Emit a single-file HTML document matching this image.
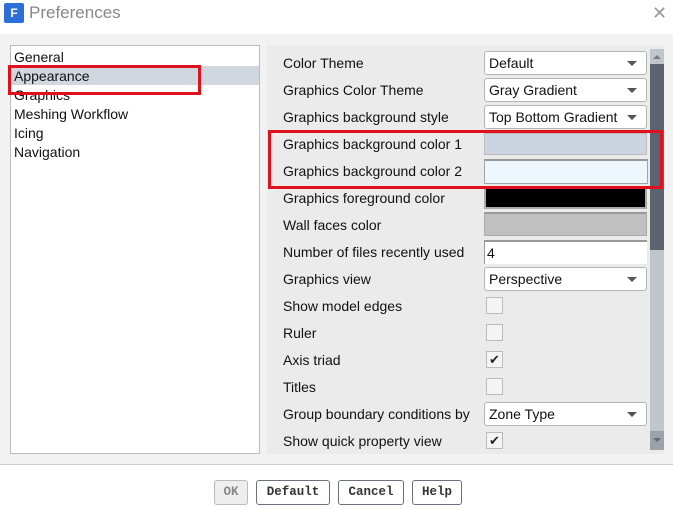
<!DOCTYPE html><html><head><style>
*{margin:0;padding:0;box-sizing:border-box}
body{width:673px;height:509px;background:#fff;font-family:"Liberation Sans","Noto Sans CJK SC",sans-serif;font-size:14px;color:#111;position:relative;overflow:hidden}
.abs{position:absolute}
.lbl{position:absolute;left:283px;font-size:14px}
.dd{position:absolute;left:484px;width:163px;height:24px;background:#fff;border:1px solid #b4b4b4;border-radius:3px;padding:3px 4px;font-size:14px}
.dd:after{content:"";position:absolute;right:9px;top:9px;border-left:5px solid transparent;border-right:5px solid transparent;border-top:5px solid #555}
.cb{position:absolute;left:486px;width:17px;height:17px;border:1px solid #bbb;background:#f4f4f4}
.btn{position:absolute;top:480px;height:25px;border:1px solid #6a7280;border-radius:3px;font-family:"Liberation Mono",monospace;font-weight:bold;font-size:12.5px;color:#333;text-align:center;line-height:23px;background:#fff}
</style></head><body>
<div class="abs" style="left:4px;top:3px;width:20px;height:20px;background:#2d6fd8;border-radius:2px;color:#fff;font-weight:bold;font-size:12px;text-align:center;line-height:20px">F</div>
<div class="abs" style="left:29px;top:3px;font-size:17px;color:#888">Preferences</div>
<div class="abs" style="left:652px;top:3px;font-size:18px;color:#999">✕</div>
<div class="abs" style="left:0;top:34px;width:673px;height:431px;background:#f2f2f2;border-bottom:1px solid #ccc"></div>
<div class="abs" style="left:10px;top:45px;width:250px;height:409px;background:#fff;border:1px solid #bbb"></div>
<div class="abs" style="left:11px;top:66px;width:248px;height:19px;background:#d0d7df"></div>
<div class="abs" style="left:14px;top:48px;line-height:19px;font-size:14px">General<br>Appearance<br>Graphics<br>Meshing Workflow<br>Icing<br>Navigation</div>
<div class="abs" style="left:8px;top:65px;width:193px;height:30px;border:3px solid #e0101e"></div>
<div class="abs" style="left:267px;top:45px;width:397px;height:409px;background:#ebebeb"></div>
<div class="abs" style="left:650px;top:49px;width:14px;height:401px;background:#c0c6cc"></div>
<div class="abs" style="left:650px;top:64px;width:14px;height:186px;background:#5b6270"></div>
<div class="abs" style="left:653px;top:55px;border-left:4px solid transparent;border-right:4px solid transparent;border-bottom:4px solid #778"></div>
<div class="abs" style="left:650px;top:431px;width:14px;height:19px;background:#9aa2ab"></div>
<div class="abs" style="left:653px;top:438px;border-left:4px solid transparent;border-right:4px solid transparent;border-top:4px solid #667"></div>
<div class="lbl" style="top:55px">Color Theme</div>
<div class="lbl" style="top:82px">Graphics Color Theme</div>
<div class="lbl" style="top:109px">Graphics background style</div>
<div class="lbl" style="top:136px">Graphics background color 1</div>
<div class="lbl" style="top:163px">Graphics background color 2</div>
<div class="lbl" style="top:190px">Graphics foreground color</div>
<div class="lbl" style="top:217px">Wall faces color</div>
<div class="lbl" style="top:244px">Number of files recently used</div>
<div class="lbl" style="top:271px">Graphics view</div>
<div class="lbl" style="top:298px">Show model edges</div>
<div class="lbl" style="top:325px">Ruler</div>
<div class="lbl" style="top:352px">Axis triad</div>
<div class="lbl" style="top:379px">Titles</div>
<div class="lbl" style="top:406px">Group boundary conditions by</div>
<div class="lbl" style="top:433px">Show quick property view</div>
<div class="dd" style="top:51px">Default</div>
<div class="dd" style="top:78px">Gray Gradient</div>
<div class="dd" style="top:105px">Top Bottom Gradient</div>
<div class="abs" style="left:484px;top:133px;width:163px;height:22px;background:#ccd3e1;border:1px solid #bbb"></div>
<div class="abs" style="left:484px;top:159px;width:164px;height:25px;background:#eef6fe;border:1px solid #9aa;border-top:2px solid #999"></div>
<div class="abs" style="left:484px;top:186px;width:163px;height:23px;background:#000;border:2px solid #aaa;border-top-width:3px"></div>
<div class="abs" style="left:484px;top:212px;width:163px;height:24px;background:#c0c0c0;border:1px solid #aaa;border-top:2px solid #999"></div>
<div class="abs" style="left:484px;top:240px;width:163px;height:24px;background:#fff;border-top:2px solid #999;border-left:1px solid #999;padding-left:2px;line-height:22px">4</div>
<div class="dd" style="top:267px">Perspective</div>
<div class="cb" style="top:297px"></div>
<div class="cb" style="top:324px"></div>
<div class="cb" style="top:351px;font-size:13px;line-height:15px;text-align:center;color:#222">✔</div>
<div class="cb" style="top:378px"></div>
<div class="dd" style="top:402px">Zone Type</div>
<div class="cb" style="top:432px;font-size:13px;line-height:15px;text-align:center;color:#222">✔</div>
<div class="abs" style="left:268px;top:130px;width:395px;height:59px;border:3px solid #e0101e"></div>
<div class="btn" style="left:214px;width:34px;background:#eee;border-color:#bbb;color:#888">OK</div>
<div class="btn" style="left:256px;width:74px">Default</div>
<div class="btn" style="left:338px;width:66px">Cancel</div>
<div class="btn" style="left:412px;width:50px">Help</div>
</body></html>
